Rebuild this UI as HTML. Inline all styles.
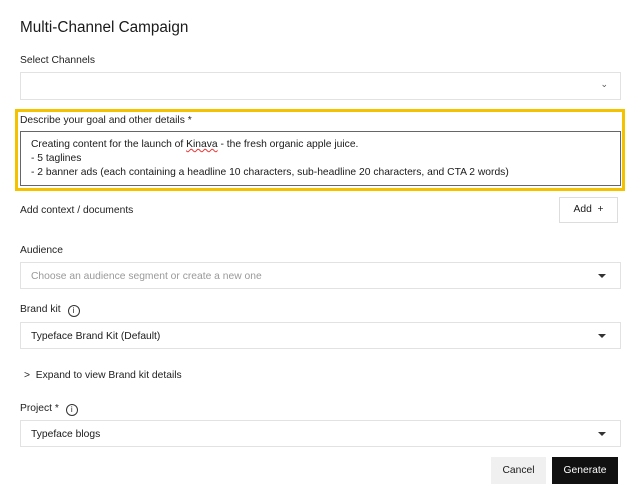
<!DOCTYPE html>
<html><head><style>
*{box-sizing:border-box;margin:0;padding:0}
body{width:636px;height:501px;background:#fff;font-family:"Liberation Sans",sans-serif;color:#1a1a1a;position:relative;overflow:hidden}
.a{position:absolute}
.lbl{font-size:10.3px;color:#222}
.box{position:absolute;left:20px;width:601px;border:1px solid #e2e2e2;background:#fff}
.tri{position:absolute;right:14px;top:11px;width:0;height:0;border-left:4px solid transparent;border-right:4px solid transparent;border-top:4px solid #333}
.val{position:absolute;left:10px;top:8px;font-size:10.3px}
.info{display:inline-block;width:12px;height:12px;border:1px solid #333;border-radius:50%;font-size:8px;text-align:center;line-height:10px;vertical-align:-1px;margin-left:4px}
</style></head><body>
<div class="a" style="left:20px;top:19px;font-size:15.3px">Multi-Channel Campaign</div>
<div class="a lbl" style="left:20px;top:55px">Select Channels</div>
<div class="box" style="top:72px;height:28px"><span class="a" style="right:12px;top:6px;font-size:9px;color:#555">&#8964;</span></div>
<div class="a" style="left:15px;top:109px;width:610px;height:82px;border:3px solid #f5c200"></div>
<div class="a lbl" style="left:20px;top:115px">Describe your goal and other details *</div>
<div class="a" style="left:20px;top:131px;width:601px;height:55px;border:1px solid #666;padding:6px 10px;font-size:10.3px;line-height:14px">Creating content for the launch of <span style="text-decoration:underline wavy #e33;text-decoration-thickness:1px">Kinava</span> - the fresh organic apple juice.<br>- 5 taglines<br>- 2 banner ads (each containing a headline 10 characters, sub-headline 20 characters, and CTA 2 words)</div>
<div class="a lbl" style="left:20px;top:205px">Add context / documents</div>
<div class="a" style="left:559px;top:197px;width:59px;height:26px;border:1px solid #ddd;font-size:10.3px;text-align:center;line-height:24px">Add &nbsp;+</div>
<div class="a lbl" style="left:20px;top:245px">Audience</div>
<div class="box" style="top:262px;height:27px"><span class="val" style="color:#999">Choose an audience segment or create a new one</span><div class="tri"></div></div>
<div class="a lbl" style="left:20px;top:304px">Brand kit <span class="info">i</span></div>
<div class="box" style="top:322px;height:27px"><span class="val">Typeface Brand Kit (Default)</span><div class="tri"></div></div>
<div class="a lbl" style="left:24px;top:370px">&gt;&nbsp; Expand to view Brand kit details</div>
<div class="a lbl" style="left:20px;top:403px">Project * <span class="info">i</span></div>
<div class="box" style="top:420px;height:27px"><span class="val">Typeface blogs</span><div class="tri"></div></div>
<div class="a" style="left:491px;top:457px;width:55px;height:27px;background:#f0f0f0;font-size:10.3px;text-align:center;line-height:27px">Cancel</div>
<div class="a" style="left:552px;top:457px;width:66px;height:27px;background:#111;color:#fff;font-size:10.3px;text-align:center;line-height:27px">Generate</div>
</body></html>
